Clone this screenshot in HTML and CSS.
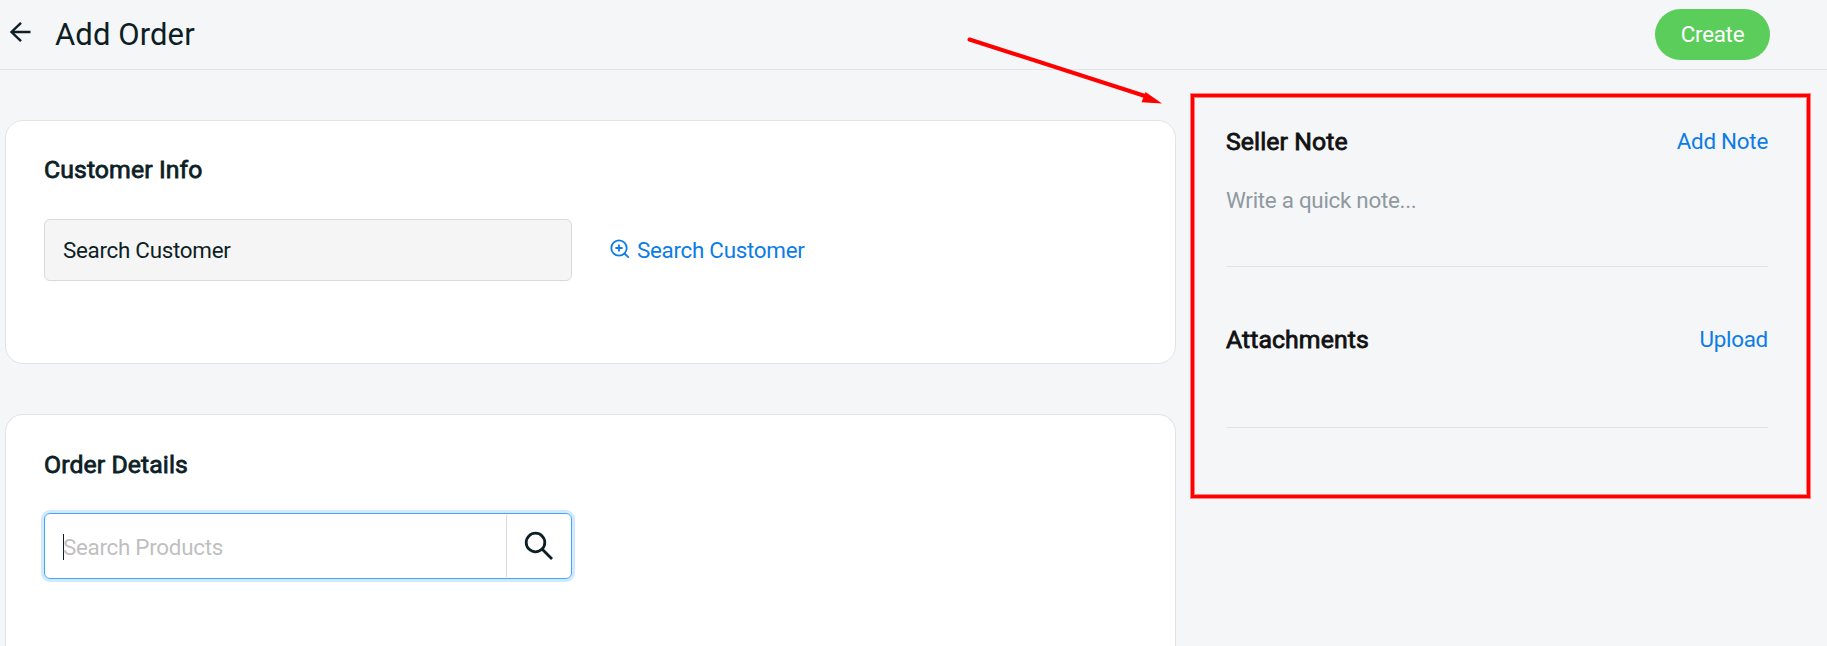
FILE: index.html
```html
<!DOCTYPE html>
<html lang="en">
<head>
<meta charset="utf-8">
<title>Add Order</title>
<link rel="stylesheet" href="styles.css">
</head>
<body>
<header class="topbar">
  <svg class="back" width="24" height="24" viewBox="0 0 24 24"><path d="M22.5 12H3.5M13 2.8L3.5 12l9.5 9.2"/></svg>
  <h1 class="title">Add Order</h1>
  <button class="create">Create</button>
</header>
<main class="layout">
  <div class="main-col">
    <section class="card card-customer">
      <h2 class="heading">Customer Info</h2>
      <div class="row">
        <div class="customer-field">Search Customer</div>
        <a class="link search-link"><svg width="20" height="20" viewBox="0 0 20 20"><circle cx="9" cy="9" r="7.7"/><path d="M14.5 14.5L18.8 18.6M9 5.4v7.2M5.4 9h7.2"/></svg>Search Customer</a>
      </div>
    </section>
    <section class="card card-order">
      <h2 class="heading">Order Details</h2>
      <div class="product-search">
        <div class="product-input"><span class="caret"></span>Search Products</div>
        <div class="product-button"><svg width="30" height="30" viewBox="0 0 30 30"><circle cx="11.5" cy="11.5" r="9.3"/><path d="M18 18l10 10"/></svg></div>
      </div>
    </section>
  </div>
  <aside class="side">
    <section class="block block-note">
      <div class="block-head"><h2 class="heading">Seller Note</h2><a class="link">Add Note</a></div>
      <p class="note">Write a quick note...</p>
    </section>
    <section class="block block-files">
      <div class="block-head"><h2 class="heading">Attachments</h2><a class="link">Upload</a></div>
    </section>
  </aside>
</main>
<svg class="arrow" width="200" height="76" viewBox="0 0 200 76"><path class="shaft" d="M4.5 4.5L180 61"/><path class="head" d="M180.5 57L197 68.5l-20.5-1.2z"/></svg>
</body>
</html>
```

FILE: styles.css
```css
* { box-sizing: border-box; }
body {
  margin: 0;
  background: #f5f6f8;
  color: #0d1e25;
  font: 22.4px/30px Roboto, sans-serif;
  letter-spacing: -.28px;
}
.topbar {
  display: flex;
  align-items: center;
  height: 70px;
  padding: 0 57px 0 8px;
  border-bottom: 1px solid #e2e3e5;
}
.back { margin-top: -5px; }
.back path { fill: none; stroke: #0d1e25; stroke-width: 2.4; }
.title { margin: 0 0 0 23px; font-size: 31px; font-weight: 400; line-height: 40px; letter-spacing: .1px; }
.create {
  width: 115px;
  height: 51px;
  margin-left: auto;
  padding: 0 0 2px;
  border: 0;
  border-radius: 26px;
  background: #5bcd5b;
  color: #fff;
  font: 22.4px/30px Roboto, sans-serif;
  letter-spacing: -.3px;
}
.layout { display: flex; gap: 15px; height: 576px; padding: 24px 15px 0 5px; }
.main-col { width: 1171px; padding-top: 26px; flex: none; }
.card {
  padding: 34px 38px 0;
  border: 1px solid #e2e3e5;
  border-radius: 18px;
  background: #fff;
}
.card-customer { height: 244px; margin-bottom: 50px; }
.card-order { height: 232px; padding-top: 35px; border-bottom: 0; border-radius: 18px 18px 0 0; }
.heading {
  margin: 0;
  font-size: 24.8px;
  font-weight: 400;
  line-height: 30px;
  letter-spacing: .09px;
  -webkit-text-stroke: .8px currentColor;
}
.row { display: flex; align-items: center; gap: 38px; margin-top: 34px; }
.customer-field {
  width: 528px;
  height: 62px;
  padding: 15px 18px;
  border: 1px solid #d9d9d9;
  border-radius: 6px;
  background: #f5f5f5;
}
.link { color: #0c7ce6; }
.search-link { display: flex; align-items: center; gap: 7px; }
.search-link svg { margin-top: -2px; fill: none; stroke: currentColor; stroke-width: 1.8; }
.product-search {
  display: flex;
  width: 528px;
  height: 66px;
  margin-top: 33px;
  padding: 1px 0;
  border: 1px solid #40a9ff;
  border-radius: 6px;
  box-shadow: 0 0 0 3px #d1e9ff;
}
.product-input {
  display: flex;
  align-items: center;
  flex: 1;
  padding: 2px 0 0 18px;
  color: #bfbfbf;
}
.caret { width: 1px; height: 26px; margin-right: -1px; background: #0d1e25; }
.product-button {
  display: flex;
  align-items: center;
  justify-content: center;
  width: 65px;
  border-left: 1px solid #d9d9d9;
}
.product-button svg { margin-top: -1px; fill: none; stroke: #0d1e25; stroke-width: 2.8; }
.side {
  width: 619px;
  height: 404px;
  padding: 0 39px 0 32px;
  border: 3px solid #f00;
  box-shadow: 0 0 0 1px #ff8080, inset 0 0 0 1px #ff8080;
}
.block { border-bottom: 1px solid #e2e3e5; }
.block-note { height: 170px; padding-top: 30px; }
.block-files { height: 161px; padding-top: 58px; }
.block-head { display: flex; justify-content: space-between; color: #111; }
.block-head .link { margin-top: -1px; letter-spacing: -.26px; }
.note { margin: 28px 0 0; color: #8f999f; }
.arrow { position: absolute; left: 965px; top: 35px; }
.shaft { stroke: #f00; stroke-width: 4; stroke-linecap: round; }
.head { fill: #f00; }
```
